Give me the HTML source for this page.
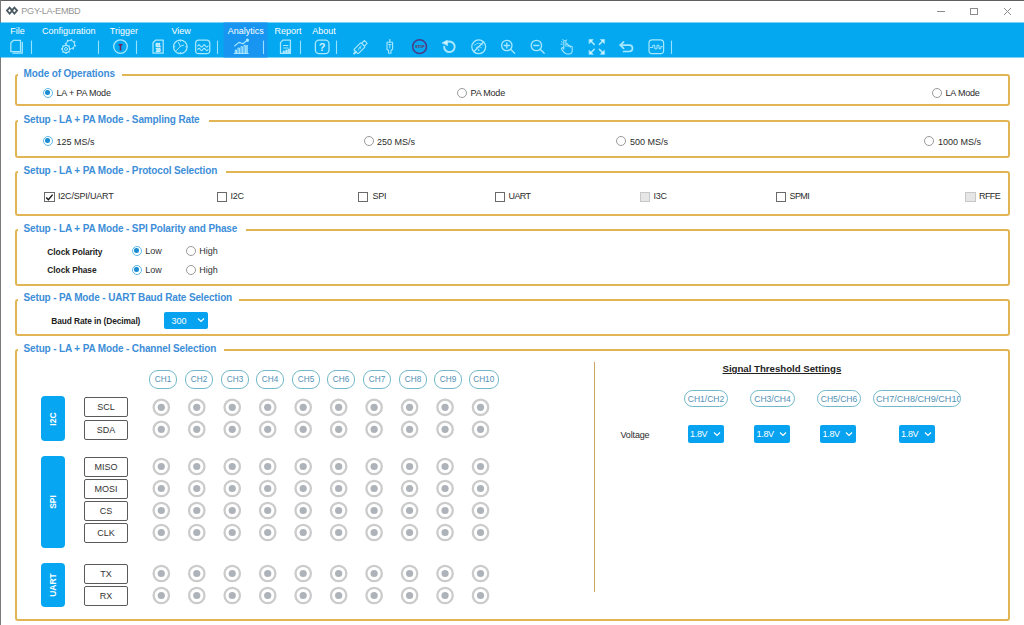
<!DOCTYPE html><html><head><meta charset="utf-8"><style>
html,body{margin:0;padding:0;}
body{width:1024px;height:625px;position:relative;overflow:hidden;background:#fff;font-family:"Liberation Sans",sans-serif;}
.t{position:absolute;white-space:nowrap;}
.b{position:absolute;box-sizing:border-box;}
.grp{position:absolute;box-sizing:border-box;border:2px solid #E2B554;border-radius:3px;}
.leg{position:absolute;background:#fff;height:6px;}
.rad{position:absolute;box-sizing:border-box;width:10px;height:10px;border-radius:50%;border:1px solid #9a9a9a;background:#fff;}
.rad.on{border:1.3px solid #5db8ec;}
.rad.on::after{content:"";position:absolute;left:1.45px;top:1.45px;width:4.5px;height:4.5px;border-radius:50%;background:#1b8cd2;}
.chk{position:absolute;box-sizing:border-box;width:10.5px;height:10.5px;border:1px solid #6a6a6a;background:#fff;}
.chk.dis{border-color:#c8c8c8;background:#e6e6e6;}
.dd{position:absolute;box-sizing:border-box;background:#08A3F0;border-radius:2px;}
.pill{position:absolute;box-sizing:border-box;border:1px solid #72B8C8;border-radius:9px;background:#fff;}
.lbl{position:absolute;box-sizing:border-box;border:1.5px solid #5a5a5a;border-radius:2px;background:#fff;}
.btn{position:absolute;box-sizing:border-box;background:#06A6F3;border-radius:4px;}
.dot{position:absolute;box-sizing:border-box;width:18px;height:18px;border-radius:50%;border:2.5px solid #cfcfcf;background:#fff;}
.dot::after{content:"";position:absolute;left:2.75px;top:2.75px;width:7.5px;height:7.5px;border-radius:50%;background:#aeb3b8;}
</style></head><body>
<div class="b" style="left:0px;top:0px;width:1024px;height:1px;background:#5f5f5f;"></div>
<div class="b" style="left:0px;top:0px;width:1px;height:625px;background:#7a7a7a;"></div>
<svg style="position:absolute;left:0;top:0" width="1024" height="22">
<g fill="none" stroke="#4a5a62" stroke-width="1.75">
<path d="M6.9 10.6 L9.6 7.6 L12.3 10.6 L9.6 13.6 Z"/>
<path d="M11.7 10.6 L14.4 7.6 L17.1 10.6 L14.4 13.6 Z"/>
</g>
<path d="M937 11.5 H945" stroke="#8c8c8c" stroke-width="1"/>
<rect x="970.5" y="8.5" width="7" height="6" fill="none" stroke="#8c8c8c" stroke-width="1"/>
<path d="M1004 8 L1011 15 M1011 8 L1004 15" stroke="#8c8c8c" stroke-width="1"/>
</svg>
<div class="t" style="left:21.30px;top:7.41px;font-size:9.2px;line-height:9.2px;color:#959595;letter-spacing:-0.3px;">PGY-LA-EMBD</div>
<svg style="position:absolute;left:0;top:0" width="1024" height="60"><rect x="0" y="22.5" width="1024" height="35" fill="#03A8F1"/><rect x="223.5" y="22.5" width="44" height="35" fill="#1895F0"/></svg>
<div class="t" style="left:10.20px;top:27.18px;font-size:9px;line-height:9px;color:#fff;">File</div>
<div class="t" style="left:42.00px;top:27.18px;font-size:9px;line-height:9px;color:#fff;">Configuration</div>
<div class="t" style="left:109.80px;top:27.18px;font-size:9px;line-height:9px;color:#fff;">Trigger</div>
<div class="t" style="left:171.50px;top:27.18px;font-size:9px;line-height:9px;color:#fff;">View</div>
<div class="t" style="left:227.80px;top:27.18px;font-size:9px;line-height:9px;color:#fff;">Analytics</div>
<div class="t" style="left:274.50px;top:27.18px;font-size:9px;line-height:9px;color:#fff;">Report</div>
<div class="t" style="left:312.30px;top:27.18px;font-size:9px;line-height:9px;color:#fff;">About</div>
<svg style="position:absolute;left:0;top:0" width="1024" height="60" fill="none" stroke="#a8e8ff" stroke-width="1.25" stroke-linecap="round" stroke-linejoin="round">
<path d="M31.5 41 V53.5" stroke-width="1.1" opacity="0.9"/>
<path d="M98.5 41 V53.5" stroke-width="1.1" opacity="0.9"/>
<path d="M136.5 41 V53.5" stroke-width="1.1" opacity="0.9"/>
<path d="M217.5 41 V53.5" stroke-width="1.1" opacity="0.9"/>
<path d="M263.5 41 V53.5" stroke-width="1.1" opacity="0.9"/>
<path d="M300.5 41 V53.5" stroke-width="1.1" opacity="0.9"/>
<path d="M336.5 41 V53.5" stroke-width="1.1" opacity="0.9"/>
<path d="M671.5 41 V53.5" stroke-width="1.1" opacity="0.9"/>
<path d="M13.5 40.3 H20.5 V51.7 H10.8 V43 Z" stroke-linejoin="round"/>
<path d="M22.3 42.3 V53.2 H13"/>
<circle cx="70.4" cy="44.6" r="4.1" stroke-width="1.1"/><path d="M74.42 45.41 L75.99 45.73 M72.67 48.02 L73.55 49.35 M69.59 48.62 L69.27 50.19 M66.98 46.87 L65.65 47.75 M66.38 43.79 L64.81 43.47 M68.13 41.18 L67.25 39.85 M71.21 40.58 L71.53 39.01 M73.82 42.33 L75.15 41.45 " stroke-width="1.5" stroke-linecap="butt"/>
<circle cx="66" cy="49" r="5.3" fill="#03A8F1" stroke="none"/>
<circle cx="66" cy="49" r="3.6" stroke-width="1.1"/><path d="M69.60 49.00 L71.00 49.00 M68.55 51.55 L69.54 52.54 M66.00 52.60 L66.00 54.00 M63.45 51.55 L62.46 52.54 M62.40 49.00 L61.00 49.00 M63.45 46.45 L62.46 45.46 M66.00 45.40 L66.00 44.00 M68.55 46.45 L69.54 45.46 " stroke-width="1.5" stroke-linecap="butt"/>
<circle cx="66" cy="49" r="1.5" stroke-width="1"/>
<circle cx="120.5" cy="46.6" r="6.8" stroke-width="1.3"/>
<path d="M118.6 44.7 H122.4 M120.5 44.7 V50.5" stroke="#7a2058" stroke-width="1.5" stroke-linecap="butt"/>
<path d="M155.5 40.2 H163.2 V53.2 H153 V42.7 Z"/>
<text x="155.4" y="47.4" font-size="4.8" font-family="Liberation Sans" font-weight="bold" fill="#d4f3ff" stroke="#d4f3ff" stroke-width="0.45" letter-spacing="-0.2">01</text><text x="155.4" y="51.9" font-size="4.8" font-family="Liberation Sans" font-weight="bold" fill="#d4f3ff" stroke="#d4f3ff" stroke-width="0.45" letter-spacing="-0.2">10</text>
<circle cx="180.3" cy="46.8" r="6.8"/><path d="M178.5 42.5 L180.3 46.3 L183.8 45 M180.3 46.3 L176.5 50.5 M180.3 40 v1.3 M180.3 52.2 v1.3 M173.6 46.8 h1.3 M185.7 46.8 h1.3" stroke-width="1"/>
<rect x="195.6" y="40.2" width="14.2" height="13.4" rx="3.2"/><path d="M197.7 46 q1.3 -2.2 2.6 0 t2.6 0 t2.6 0 t2.6 0 M197.7 49.5 q1.3 -2.2 2.6 0 t2.6 0 t2.6 0 t2.6 0" stroke-width="1.1"/>
<path d="M234.2 53.5 H248.2" stroke-width="1.2"/>
<path d="M235.3 53.5 V50 H236.5 V53.5 M238 53.5 V48 H239.4 V53.5 M241 53.5 V46.6 H242.4 V53.5 M244 53.5 V45.4 H245.4 V53.5 M247 53.5 V45 V53.5" stroke-width="1"/>
<path d="M234.8 45.8 L239 42.4 L243 43.8 L247 40.4" stroke-width="1.2"/><circle cx="247.4" cy="40.2" r="1" fill="#d4f3ff"/>
<path d="M282.8 40.2 H290.4 V53.4 H280.5 V42.6 Z"/><path d="M283.5 45.5 H288 M283.5 48 H288" stroke-width="1"/><path d="M283.2 53 V51 H284.6 V53 M285.8 53 V50 H287.2 V53 M288.3 53 V49 H289.5 V53" stroke-width="0.9" fill="#d4f3ff"/>
<rect x="315.4" y="40.2" width="13.6" height="13.4" rx="3.6" stroke-width="1.3"/><text x="318.8" y="51.4" font-size="11" font-family="Liberation Sans" font-weight="bold" fill="#d4f3ff" stroke="none">?</text>
<g transform="translate(360.5 47.2) rotate(-45)"><rect x="-6.5" y="-3" width="10" height="6" rx="0.8" stroke-width="1.2"/><path d="M3.5 -2 H7.5 V2 H3.5" stroke-width="1.1"/><path d="M-6.5 0 H-9" stroke-width="2"/><path d="M-3.5 0.5 L-0.5 -0.8 M-1 0.8 L1.2 -0.6" stroke-width="0.8"/></g>
<path d="M389.8 39.6 V42" stroke-width="1.2"/><path d="M387 42.3 H392.6 V49.2 L391 50.5 V53.3 H388.6 V50.5 L387 49.2 Z" stroke-width="1.1"/><path d="M388.6 44.5 H391 M389.8 44.5 V48" stroke-width="0.9"/>
<circle cx="419.6" cy="46.7" r="6.9" stroke="#4a3a86" stroke-width="1.5"/>
<text x="415.2" y="48.2" font-size="3.7" font-family="Liberation Sans" font-weight="bold" fill="#7a2a50" stroke="none" letter-spacing="-0.15">STOP</text>
<path d="M446.2 42.6 A5.3 5.3 0 1 1 444.2 46" stroke-width="2" stroke-linecap="butt"/><path d="M442.3 42.8 L447.3 40.2 L447.6 45.3 Z" fill="#d4f3ff" stroke-width="0.8"/>
<circle cx="478.7" cy="46.8" r="6.9" stroke-width="1.3"/><path d="M473.7 51.8 L483.7 41.8" stroke-width="1.3"/><path d="M474.3 45.3 Q478.7 41 483.1 45.3 M476 47.6 Q478.7 45 481.4 47.6" stroke-width="1" opacity="0.75"/><circle cx="478.7" cy="50" r="0.8" fill="#d4f3ff" stroke="none"/>
<circle cx="506.8" cy="45.5" r="5.2" stroke-width="1.3"/><path d="M510.6 49.3 L514.6 53.3 M504.2 45.5 H509.4 M506.8 42.9 V48.1" stroke-width="1.3"/>
<circle cx="536.4" cy="45.5" r="5.2" stroke-width="1.3"/><path d="M540.2 49.3 L544.2 53.3 M533.8 45.5 H539" stroke-width="1.3"/>
<path d="M563.8 49 V41.6 a1.05 1.05 0 0 1 2.1 0 V46.2 V44.9 a1.05 1.05 0 0 1 2.1 0 V46.4 a1.05 1.05 0 0 1 2.1 0 V47.2 a1.05 1.05 0 0 1 2.1 0 V50.6 Q572.2 53.9 569.2 53.9 H567 Q565.3 53.9 564 52.3 L561.6 49.3 a1 1 0 0 1 1.6 -1.2 Z" stroke-width="1.05"/>
<path d="M561.3 41.6 L562.3 42.4 M561 44.2 H562.2 M562.8 39.4 L563.2 40.3 M566.6 39.8 L566.2 40.6" stroke-width="0.9"/>
<path d="M590.2 40.4 L594.2 44.4 M603.4 40.4 L599.4 44.4 M590.2 53.4 L594.2 49.4 M603.4 53.4 L599.4 49.4" stroke-width="1.5"/>
<path d="M589.3 39.5 H593.3 L589.3 43.5 Z M604.3 39.5 H600.3 L604.3 43.5 Z M589.3 54.3 H593.3 L589.3 50.3 Z M604.3 54.3 H600.3 L604.3 50.3 Z" fill="#d4f3ff" stroke-width="0.6"/>
<path d="M620.3 45.1 H629.3 A3.2 3.2 0 0 1 629.3 51.5 H623.5" stroke-width="1.7"/><path d="M623.6 41.8 L620.3 45.1 L623.6 48.4" stroke-width="1.7"/>
<rect x="649" y="39.8" width="14.6" height="13.8" rx="3.2" stroke-width="1.2"/><path d="M650.5 47.5 H652.8 V45.3 H654.8 V48.8 H657 V45.3 H659 V48.8 H660.8 V46.6 H662.3" stroke-width="1"/>
</svg>
<div class="grp" style="left:15px;top:74px;width:995px;height:32px;"></div>
<div class="leg" style="left:18px;top:72px;width:104px;"></div>
<div class="t" style="left:23.50px;top:68.53px;font-size:10px;line-height:10px;color:#3D8ED8;font-weight:bold;letter-spacing:-0.14px;">Mode of Operations</div>
<div class="grp" style="left:15px;top:120px;width:995px;height:38px;"></div>
<div class="leg" style="left:18px;top:118px;width:190.5px;"></div>
<div class="t" style="left:23.50px;top:114.83px;font-size:10px;line-height:10px;color:#3D8ED8;font-weight:bold;letter-spacing:-0.14px;">Setup - LA + PA Mode - Sampling Rate</div>
<div class="grp" style="left:15px;top:171px;width:995px;height:45px;"></div>
<div class="leg" style="left:18px;top:169px;width:208px;"></div>
<div class="t" style="left:23.50px;top:165.83px;font-size:10px;line-height:10px;color:#3D8ED8;font-weight:bold;letter-spacing:-0.14px;">Setup - LA + PA Mode - Protocol Selection</div>
<div class="grp" style="left:15px;top:229px;width:995px;height:57px;"></div>
<div class="leg" style="left:18px;top:227px;width:228.3px;"></div>
<div class="t" style="left:23.50px;top:223.83px;font-size:10px;line-height:10px;color:#3D8ED8;font-weight:bold;letter-spacing:-0.14px;">Setup - LA + PA Mode - SPI Polarity and Phase</div>
<div class="grp" style="left:15px;top:299px;width:995px;height:37px;"></div>
<div class="leg" style="left:18px;top:297px;width:221px;"></div>
<div class="t" style="left:23.50px;top:293.43px;font-size:10px;line-height:10px;color:#3D8ED8;font-weight:bold;letter-spacing:-0.14px;">Setup - PA Mode - UART Baud Rate Selection</div>
<div class="grp" style="left:15px;top:349px;width:995px;height:272px;"></div>
<div class="leg" style="left:18px;top:347px;width:206px;"></div>
<div class="t" style="left:23.50px;top:344.03px;font-size:10px;line-height:10px;color:#3D8ED8;font-weight:bold;letter-spacing:-0.14px;">Setup - LA + PA Mode - Channel Selection</div>
<div class="rad on" style="left:43px;top:88px;"></div>
<div class="t" style="left:56.50px;top:89.18px;font-size:9px;line-height:9px;color:#2b2b2b;letter-spacing:-0.2px;">LA + PA Mode</div>
<div class="rad" style="left:457px;top:88px;"></div>
<div class="t" style="left:470.50px;top:89.18px;font-size:9px;line-height:9px;color:#2b2b2b;letter-spacing:-0.2px;">PA Mode</div>
<div class="rad" style="left:932px;top:88px;"></div>
<div class="t" style="left:945.50px;top:89.18px;font-size:9px;line-height:9px;color:#2b2b2b;letter-spacing:-0.2px;">LA Mode</div>
<div class="rad on" style="left:43px;top:136px;"></div>
<div class="t" style="left:56.50px;top:137.88px;font-size:9px;line-height:9px;color:#2b2b2b;">125 MS/s</div>
<div class="rad" style="left:364px;top:136px;"></div>
<div class="t" style="left:377.00px;top:137.88px;font-size:9px;line-height:9px;color:#2b2b2b;">250 MS/s</div>
<div class="rad" style="left:616px;top:136px;"></div>
<div class="t" style="left:630.00px;top:137.88px;font-size:9px;line-height:9px;color:#2b2b2b;">500 MS/s</div>
<div class="rad" style="left:924px;top:136px;"></div>
<div class="t" style="left:938.00px;top:137.88px;font-size:9px;line-height:9px;color:#2b2b2b;">1000 MS/s</div>
<div class="chk" style="left:44px;top:191.7px;"></div>
<svg style="position:absolute;left:44px;top:191.7px" width="11" height="11"><path d="M2.2 5.4 L4.4 7.7 L8.6 2.6" fill="none" stroke="#1a1a1a" stroke-width="1.45"/></svg>
<div class="t" style="left:58.00px;top:191.98px;font-size:9px;line-height:9px;color:#2b2b2b;letter-spacing:-0.2px;">I2C/SPI/UART</div>
<div class="chk" style="left:216.5px;top:191.7px;"></div>
<div class="t" style="left:230.50px;top:191.98px;font-size:9px;line-height:9px;color:#2b2b2b;letter-spacing:-0.2px;">I2C</div>
<div class="chk" style="left:357.5px;top:191.7px;"></div>
<div class="t" style="left:372.50px;top:191.98px;font-size:9px;line-height:9px;color:#2b2b2b;letter-spacing:-0.2px;">SPI</div>
<div class="chk" style="left:494.5px;top:191.7px;"></div>
<div class="t" style="left:508.50px;top:191.98px;font-size:9px;line-height:9px;color:#2b2b2b;letter-spacing:-0.6px;">UART</div>
<div class="chk dis" style="left:639.5px;top:191.7px;"></div>
<div class="t" style="left:653.50px;top:191.98px;font-size:9px;line-height:9px;color:#2b2b2b;letter-spacing:-0.2px;">I3C</div>
<div class="chk" style="left:775.5px;top:191.7px;"></div>
<div class="t" style="left:789.50px;top:191.98px;font-size:9px;line-height:9px;color:#2b2b2b;letter-spacing:-0.6px;">SPMI</div>
<div class="chk dis" style="left:965px;top:191.7px;"></div>
<div class="t" style="left:979.00px;top:191.98px;font-size:9px;line-height:9px;color:#2b2b2b;letter-spacing:-0.6px;">RFFE</div>
<div class="t" style="left:47.30px;top:247.69px;font-size:8.4px;line-height:8.4px;color:#222;font-weight:bold;letter-spacing:-0.05px;">Clock Polarity</div>
<div class="t" style="left:47.30px;top:266.39px;font-size:8.4px;line-height:8.4px;color:#222;font-weight:bold;letter-spacing:-0.05px;">Clock Phase</div>
<div class="rad on" style="left:132px;top:246px;"></div>
<div class="t" style="left:145.30px;top:247.18px;font-size:9px;line-height:9px;color:#333;">Low</div>
<div class="rad" style="left:186px;top:246px;"></div>
<div class="t" style="left:199.30px;top:247.18px;font-size:9px;line-height:9px;color:#333;">High</div>
<div class="rad on" style="left:132px;top:265px;"></div>
<div class="t" style="left:145.30px;top:265.88px;font-size:9px;line-height:9px;color:#333;">Low</div>
<div class="rad" style="left:186px;top:265px;"></div>
<div class="t" style="left:199.30px;top:265.88px;font-size:9px;line-height:9px;color:#333;">High</div>
<div class="t" style="left:51.30px;top:317.09px;font-size:8.4px;line-height:8.4px;color:#222;font-weight:bold;letter-spacing:-0.1px;">Baud Rate in (Decimal)</div>
<div class="dd" style="left:164px;top:312px;width:44px;height:16.5px;"></div>
<div class="t" style="left:171.50px;top:316.98px;font-size:9px;line-height:9px;color:#fff;">300</div>
<svg style="position:absolute;left:196px;top:316px" width="10" height="8"><path d="M2 2.5 L5 5.5 L8 2.5" fill="none" stroke="#fff" stroke-width="1.15"/></svg>
<div class="pill" style="left:149.30px;top:370.2px;width:28px;height:18.4px;"></div>
<div class="t" style="left:149.30px;width:28px;text-align:center;top:373.8px;font-size:9.8px;line-height:10px;color:#5290B4;transform:scaleX(0.84);">CH1</div>
<div class="pill" style="left:184.93px;top:370.2px;width:28px;height:18.4px;"></div>
<div class="t" style="left:184.93px;width:28px;text-align:center;top:373.8px;font-size:9.8px;line-height:10px;color:#5290B4;transform:scaleX(0.84);">CH2</div>
<div class="pill" style="left:220.56px;top:370.2px;width:28px;height:18.4px;"></div>
<div class="t" style="left:220.56px;width:28px;text-align:center;top:373.8px;font-size:9.8px;line-height:10px;color:#5290B4;transform:scaleX(0.84);">CH3</div>
<div class="pill" style="left:256.19px;top:370.2px;width:28px;height:18.4px;"></div>
<div class="t" style="left:256.19px;width:28px;text-align:center;top:373.8px;font-size:9.8px;line-height:10px;color:#5290B4;transform:scaleX(0.84);">CH4</div>
<div class="pill" style="left:291.82px;top:370.2px;width:28px;height:18.4px;"></div>
<div class="t" style="left:291.82px;width:28px;text-align:center;top:373.8px;font-size:9.8px;line-height:10px;color:#5290B4;transform:scaleX(0.84);">CH5</div>
<div class="pill" style="left:327.45px;top:370.2px;width:28px;height:18.4px;"></div>
<div class="t" style="left:327.45px;width:28px;text-align:center;top:373.8px;font-size:9.8px;line-height:10px;color:#5290B4;transform:scaleX(0.84);">CH6</div>
<div class="pill" style="left:363.08px;top:370.2px;width:28px;height:18.4px;"></div>
<div class="t" style="left:363.08px;width:28px;text-align:center;top:373.8px;font-size:9.8px;line-height:10px;color:#5290B4;transform:scaleX(0.84);">CH7</div>
<div class="pill" style="left:398.71px;top:370.2px;width:28px;height:18.4px;"></div>
<div class="t" style="left:398.71px;width:28px;text-align:center;top:373.8px;font-size:9.8px;line-height:10px;color:#5290B4;transform:scaleX(0.84);">CH8</div>
<div class="pill" style="left:434.34px;top:370.2px;width:28px;height:18.4px;"></div>
<div class="t" style="left:434.34px;width:28px;text-align:center;top:373.8px;font-size:9.8px;line-height:10px;color:#5290B4;transform:scaleX(0.84);">CH9</div>
<div class="pill" style="left:469.22px;top:370.2px;width:29.5px;height:18.4px;"></div>
<div class="t" style="left:469.22px;width:29.5px;text-align:center;top:373.8px;font-size:9.8px;line-height:10px;color:#5290B4;transform:scaleX(0.84);">CH10</div>
<svg style="position:absolute;left:0;top:0" width="1024" height="625">
<circle cx="161.30" cy="407.3" r="7.7" fill="none" stroke="#cbcbcb" stroke-width="2.3"/><circle cx="161.30" cy="407.3" r="3.6" fill="#adb3b9"/>
<circle cx="196.77" cy="407.3" r="7.7" fill="none" stroke="#cbcbcb" stroke-width="2.3"/><circle cx="196.77" cy="407.3" r="3.6" fill="#adb3b9"/>
<circle cx="232.24" cy="407.3" r="7.7" fill="none" stroke="#cbcbcb" stroke-width="2.3"/><circle cx="232.24" cy="407.3" r="3.6" fill="#adb3b9"/>
<circle cx="267.71" cy="407.3" r="7.7" fill="none" stroke="#cbcbcb" stroke-width="2.3"/><circle cx="267.71" cy="407.3" r="3.6" fill="#adb3b9"/>
<circle cx="303.18" cy="407.3" r="7.7" fill="none" stroke="#cbcbcb" stroke-width="2.3"/><circle cx="303.18" cy="407.3" r="3.6" fill="#adb3b9"/>
<circle cx="338.65" cy="407.3" r="7.7" fill="none" stroke="#cbcbcb" stroke-width="2.3"/><circle cx="338.65" cy="407.3" r="3.6" fill="#adb3b9"/>
<circle cx="374.12" cy="407.3" r="7.7" fill="none" stroke="#cbcbcb" stroke-width="2.3"/><circle cx="374.12" cy="407.3" r="3.6" fill="#adb3b9"/>
<circle cx="409.59" cy="407.3" r="7.7" fill="none" stroke="#cbcbcb" stroke-width="2.3"/><circle cx="409.59" cy="407.3" r="3.6" fill="#adb3b9"/>
<circle cx="445.06" cy="407.3" r="7.7" fill="none" stroke="#cbcbcb" stroke-width="2.3"/><circle cx="445.06" cy="407.3" r="3.6" fill="#adb3b9"/>
<circle cx="480.53" cy="407.3" r="7.7" fill="none" stroke="#cbcbcb" stroke-width="2.3"/><circle cx="480.53" cy="407.3" r="3.6" fill="#adb3b9"/>
<circle cx="161.30" cy="429.3" r="7.7" fill="none" stroke="#cbcbcb" stroke-width="2.3"/><circle cx="161.30" cy="429.3" r="3.6" fill="#adb3b9"/>
<circle cx="196.77" cy="429.3" r="7.7" fill="none" stroke="#cbcbcb" stroke-width="2.3"/><circle cx="196.77" cy="429.3" r="3.6" fill="#adb3b9"/>
<circle cx="232.24" cy="429.3" r="7.7" fill="none" stroke="#cbcbcb" stroke-width="2.3"/><circle cx="232.24" cy="429.3" r="3.6" fill="#adb3b9"/>
<circle cx="267.71" cy="429.3" r="7.7" fill="none" stroke="#cbcbcb" stroke-width="2.3"/><circle cx="267.71" cy="429.3" r="3.6" fill="#adb3b9"/>
<circle cx="303.18" cy="429.3" r="7.7" fill="none" stroke="#cbcbcb" stroke-width="2.3"/><circle cx="303.18" cy="429.3" r="3.6" fill="#adb3b9"/>
<circle cx="338.65" cy="429.3" r="7.7" fill="none" stroke="#cbcbcb" stroke-width="2.3"/><circle cx="338.65" cy="429.3" r="3.6" fill="#adb3b9"/>
<circle cx="374.12" cy="429.3" r="7.7" fill="none" stroke="#cbcbcb" stroke-width="2.3"/><circle cx="374.12" cy="429.3" r="3.6" fill="#adb3b9"/>
<circle cx="409.59" cy="429.3" r="7.7" fill="none" stroke="#cbcbcb" stroke-width="2.3"/><circle cx="409.59" cy="429.3" r="3.6" fill="#adb3b9"/>
<circle cx="445.06" cy="429.3" r="7.7" fill="none" stroke="#cbcbcb" stroke-width="2.3"/><circle cx="445.06" cy="429.3" r="3.6" fill="#adb3b9"/>
<circle cx="480.53" cy="429.3" r="7.7" fill="none" stroke="#cbcbcb" stroke-width="2.3"/><circle cx="480.53" cy="429.3" r="3.6" fill="#adb3b9"/>
<circle cx="161.30" cy="466.5" r="7.7" fill="none" stroke="#cbcbcb" stroke-width="2.3"/><circle cx="161.30" cy="466.5" r="3.6" fill="#adb3b9"/>
<circle cx="196.77" cy="466.5" r="7.7" fill="none" stroke="#cbcbcb" stroke-width="2.3"/><circle cx="196.77" cy="466.5" r="3.6" fill="#adb3b9"/>
<circle cx="232.24" cy="466.5" r="7.7" fill="none" stroke="#cbcbcb" stroke-width="2.3"/><circle cx="232.24" cy="466.5" r="3.6" fill="#adb3b9"/>
<circle cx="267.71" cy="466.5" r="7.7" fill="none" stroke="#cbcbcb" stroke-width="2.3"/><circle cx="267.71" cy="466.5" r="3.6" fill="#adb3b9"/>
<circle cx="303.18" cy="466.5" r="7.7" fill="none" stroke="#cbcbcb" stroke-width="2.3"/><circle cx="303.18" cy="466.5" r="3.6" fill="#adb3b9"/>
<circle cx="338.65" cy="466.5" r="7.7" fill="none" stroke="#cbcbcb" stroke-width="2.3"/><circle cx="338.65" cy="466.5" r="3.6" fill="#adb3b9"/>
<circle cx="374.12" cy="466.5" r="7.7" fill="none" stroke="#cbcbcb" stroke-width="2.3"/><circle cx="374.12" cy="466.5" r="3.6" fill="#adb3b9"/>
<circle cx="409.59" cy="466.5" r="7.7" fill="none" stroke="#cbcbcb" stroke-width="2.3"/><circle cx="409.59" cy="466.5" r="3.6" fill="#adb3b9"/>
<circle cx="445.06" cy="466.5" r="7.7" fill="none" stroke="#cbcbcb" stroke-width="2.3"/><circle cx="445.06" cy="466.5" r="3.6" fill="#adb3b9"/>
<circle cx="480.53" cy="466.5" r="7.7" fill="none" stroke="#cbcbcb" stroke-width="2.3"/><circle cx="480.53" cy="466.5" r="3.6" fill="#adb3b9"/>
<circle cx="161.30" cy="488.5" r="7.7" fill="none" stroke="#cbcbcb" stroke-width="2.3"/><circle cx="161.30" cy="488.5" r="3.6" fill="#adb3b9"/>
<circle cx="196.77" cy="488.5" r="7.7" fill="none" stroke="#cbcbcb" stroke-width="2.3"/><circle cx="196.77" cy="488.5" r="3.6" fill="#adb3b9"/>
<circle cx="232.24" cy="488.5" r="7.7" fill="none" stroke="#cbcbcb" stroke-width="2.3"/><circle cx="232.24" cy="488.5" r="3.6" fill="#adb3b9"/>
<circle cx="267.71" cy="488.5" r="7.7" fill="none" stroke="#cbcbcb" stroke-width="2.3"/><circle cx="267.71" cy="488.5" r="3.6" fill="#adb3b9"/>
<circle cx="303.18" cy="488.5" r="7.7" fill="none" stroke="#cbcbcb" stroke-width="2.3"/><circle cx="303.18" cy="488.5" r="3.6" fill="#adb3b9"/>
<circle cx="338.65" cy="488.5" r="7.7" fill="none" stroke="#cbcbcb" stroke-width="2.3"/><circle cx="338.65" cy="488.5" r="3.6" fill="#adb3b9"/>
<circle cx="374.12" cy="488.5" r="7.7" fill="none" stroke="#cbcbcb" stroke-width="2.3"/><circle cx="374.12" cy="488.5" r="3.6" fill="#adb3b9"/>
<circle cx="409.59" cy="488.5" r="7.7" fill="none" stroke="#cbcbcb" stroke-width="2.3"/><circle cx="409.59" cy="488.5" r="3.6" fill="#adb3b9"/>
<circle cx="445.06" cy="488.5" r="7.7" fill="none" stroke="#cbcbcb" stroke-width="2.3"/><circle cx="445.06" cy="488.5" r="3.6" fill="#adb3b9"/>
<circle cx="480.53" cy="488.5" r="7.7" fill="none" stroke="#cbcbcb" stroke-width="2.3"/><circle cx="480.53" cy="488.5" r="3.6" fill="#adb3b9"/>
<circle cx="161.30" cy="510.5" r="7.7" fill="none" stroke="#cbcbcb" stroke-width="2.3"/><circle cx="161.30" cy="510.5" r="3.6" fill="#adb3b9"/>
<circle cx="196.77" cy="510.5" r="7.7" fill="none" stroke="#cbcbcb" stroke-width="2.3"/><circle cx="196.77" cy="510.5" r="3.6" fill="#adb3b9"/>
<circle cx="232.24" cy="510.5" r="7.7" fill="none" stroke="#cbcbcb" stroke-width="2.3"/><circle cx="232.24" cy="510.5" r="3.6" fill="#adb3b9"/>
<circle cx="267.71" cy="510.5" r="7.7" fill="none" stroke="#cbcbcb" stroke-width="2.3"/><circle cx="267.71" cy="510.5" r="3.6" fill="#adb3b9"/>
<circle cx="303.18" cy="510.5" r="7.7" fill="none" stroke="#cbcbcb" stroke-width="2.3"/><circle cx="303.18" cy="510.5" r="3.6" fill="#adb3b9"/>
<circle cx="338.65" cy="510.5" r="7.7" fill="none" stroke="#cbcbcb" stroke-width="2.3"/><circle cx="338.65" cy="510.5" r="3.6" fill="#adb3b9"/>
<circle cx="374.12" cy="510.5" r="7.7" fill="none" stroke="#cbcbcb" stroke-width="2.3"/><circle cx="374.12" cy="510.5" r="3.6" fill="#adb3b9"/>
<circle cx="409.59" cy="510.5" r="7.7" fill="none" stroke="#cbcbcb" stroke-width="2.3"/><circle cx="409.59" cy="510.5" r="3.6" fill="#adb3b9"/>
<circle cx="445.06" cy="510.5" r="7.7" fill="none" stroke="#cbcbcb" stroke-width="2.3"/><circle cx="445.06" cy="510.5" r="3.6" fill="#adb3b9"/>
<circle cx="480.53" cy="510.5" r="7.7" fill="none" stroke="#cbcbcb" stroke-width="2.3"/><circle cx="480.53" cy="510.5" r="3.6" fill="#adb3b9"/>
<circle cx="161.30" cy="532.5" r="7.7" fill="none" stroke="#cbcbcb" stroke-width="2.3"/><circle cx="161.30" cy="532.5" r="3.6" fill="#adb3b9"/>
<circle cx="196.77" cy="532.5" r="7.7" fill="none" stroke="#cbcbcb" stroke-width="2.3"/><circle cx="196.77" cy="532.5" r="3.6" fill="#adb3b9"/>
<circle cx="232.24" cy="532.5" r="7.7" fill="none" stroke="#cbcbcb" stroke-width="2.3"/><circle cx="232.24" cy="532.5" r="3.6" fill="#adb3b9"/>
<circle cx="267.71" cy="532.5" r="7.7" fill="none" stroke="#cbcbcb" stroke-width="2.3"/><circle cx="267.71" cy="532.5" r="3.6" fill="#adb3b9"/>
<circle cx="303.18" cy="532.5" r="7.7" fill="none" stroke="#cbcbcb" stroke-width="2.3"/><circle cx="303.18" cy="532.5" r="3.6" fill="#adb3b9"/>
<circle cx="338.65" cy="532.5" r="7.7" fill="none" stroke="#cbcbcb" stroke-width="2.3"/><circle cx="338.65" cy="532.5" r="3.6" fill="#adb3b9"/>
<circle cx="374.12" cy="532.5" r="7.7" fill="none" stroke="#cbcbcb" stroke-width="2.3"/><circle cx="374.12" cy="532.5" r="3.6" fill="#adb3b9"/>
<circle cx="409.59" cy="532.5" r="7.7" fill="none" stroke="#cbcbcb" stroke-width="2.3"/><circle cx="409.59" cy="532.5" r="3.6" fill="#adb3b9"/>
<circle cx="445.06" cy="532.5" r="7.7" fill="none" stroke="#cbcbcb" stroke-width="2.3"/><circle cx="445.06" cy="532.5" r="3.6" fill="#adb3b9"/>
<circle cx="480.53" cy="532.5" r="7.7" fill="none" stroke="#cbcbcb" stroke-width="2.3"/><circle cx="480.53" cy="532.5" r="3.6" fill="#adb3b9"/>
<circle cx="161.30" cy="573.5" r="7.7" fill="none" stroke="#cbcbcb" stroke-width="2.3"/><circle cx="161.30" cy="573.5" r="3.6" fill="#adb3b9"/>
<circle cx="196.77" cy="573.5" r="7.7" fill="none" stroke="#cbcbcb" stroke-width="2.3"/><circle cx="196.77" cy="573.5" r="3.6" fill="#adb3b9"/>
<circle cx="232.24" cy="573.5" r="7.7" fill="none" stroke="#cbcbcb" stroke-width="2.3"/><circle cx="232.24" cy="573.5" r="3.6" fill="#adb3b9"/>
<circle cx="267.71" cy="573.5" r="7.7" fill="none" stroke="#cbcbcb" stroke-width="2.3"/><circle cx="267.71" cy="573.5" r="3.6" fill="#adb3b9"/>
<circle cx="303.18" cy="573.5" r="7.7" fill="none" stroke="#cbcbcb" stroke-width="2.3"/><circle cx="303.18" cy="573.5" r="3.6" fill="#adb3b9"/>
<circle cx="338.65" cy="573.5" r="7.7" fill="none" stroke="#cbcbcb" stroke-width="2.3"/><circle cx="338.65" cy="573.5" r="3.6" fill="#adb3b9"/>
<circle cx="374.12" cy="573.5" r="7.7" fill="none" stroke="#cbcbcb" stroke-width="2.3"/><circle cx="374.12" cy="573.5" r="3.6" fill="#adb3b9"/>
<circle cx="409.59" cy="573.5" r="7.7" fill="none" stroke="#cbcbcb" stroke-width="2.3"/><circle cx="409.59" cy="573.5" r="3.6" fill="#adb3b9"/>
<circle cx="445.06" cy="573.5" r="7.7" fill="none" stroke="#cbcbcb" stroke-width="2.3"/><circle cx="445.06" cy="573.5" r="3.6" fill="#adb3b9"/>
<circle cx="480.53" cy="573.5" r="7.7" fill="none" stroke="#cbcbcb" stroke-width="2.3"/><circle cx="480.53" cy="573.5" r="3.6" fill="#adb3b9"/>
<circle cx="161.30" cy="595.5" r="7.7" fill="none" stroke="#cbcbcb" stroke-width="2.3"/><circle cx="161.30" cy="595.5" r="3.6" fill="#adb3b9"/>
<circle cx="196.77" cy="595.5" r="7.7" fill="none" stroke="#cbcbcb" stroke-width="2.3"/><circle cx="196.77" cy="595.5" r="3.6" fill="#adb3b9"/>
<circle cx="232.24" cy="595.5" r="7.7" fill="none" stroke="#cbcbcb" stroke-width="2.3"/><circle cx="232.24" cy="595.5" r="3.6" fill="#adb3b9"/>
<circle cx="267.71" cy="595.5" r="7.7" fill="none" stroke="#cbcbcb" stroke-width="2.3"/><circle cx="267.71" cy="595.5" r="3.6" fill="#adb3b9"/>
<circle cx="303.18" cy="595.5" r="7.7" fill="none" stroke="#cbcbcb" stroke-width="2.3"/><circle cx="303.18" cy="595.5" r="3.6" fill="#adb3b9"/>
<circle cx="338.65" cy="595.5" r="7.7" fill="none" stroke="#cbcbcb" stroke-width="2.3"/><circle cx="338.65" cy="595.5" r="3.6" fill="#adb3b9"/>
<circle cx="374.12" cy="595.5" r="7.7" fill="none" stroke="#cbcbcb" stroke-width="2.3"/><circle cx="374.12" cy="595.5" r="3.6" fill="#adb3b9"/>
<circle cx="409.59" cy="595.5" r="7.7" fill="none" stroke="#cbcbcb" stroke-width="2.3"/><circle cx="409.59" cy="595.5" r="3.6" fill="#adb3b9"/>
<circle cx="445.06" cy="595.5" r="7.7" fill="none" stroke="#cbcbcb" stroke-width="2.3"/><circle cx="445.06" cy="595.5" r="3.6" fill="#adb3b9"/>
<circle cx="480.53" cy="595.5" r="7.7" fill="none" stroke="#cbcbcb" stroke-width="2.3"/><circle cx="480.53" cy="595.5" r="3.6" fill="#adb3b9"/>
</svg>
<div class="lbl" style="left:84px;top:397px;width:44px;height:20px;"></div>
<div class="t" style="left:84px;width:44px;text-align:center;top:402px;font-size:9px;line-height:10px;color:#333;">SCL</div>
<div class="lbl" style="left:84px;top:420px;width:44px;height:20px;"></div>
<div class="t" style="left:84px;width:44px;text-align:center;top:425px;font-size:9px;line-height:10px;color:#333;">SDA</div>
<div class="lbl" style="left:84px;top:457px;width:44px;height:20px;"></div>
<div class="t" style="left:84px;width:44px;text-align:center;top:462px;font-size:9px;line-height:10px;color:#333;">MISO</div>
<div class="lbl" style="left:84px;top:479px;width:44px;height:20px;"></div>
<div class="t" style="left:84px;width:44px;text-align:center;top:484px;font-size:9px;line-height:10px;color:#333;">MOSI</div>
<div class="lbl" style="left:84px;top:501px;width:44px;height:20px;"></div>
<div class="t" style="left:84px;width:44px;text-align:center;top:506px;font-size:9px;line-height:10px;color:#333;">CS</div>
<div class="lbl" style="left:84px;top:523px;width:44px;height:20px;"></div>
<div class="t" style="left:84px;width:44px;text-align:center;top:528px;font-size:9px;line-height:10px;color:#333;">CLK</div>
<div class="lbl" style="left:84px;top:564px;width:44px;height:20px;"></div>
<div class="t" style="left:84px;width:44px;text-align:center;top:569px;font-size:9px;line-height:10px;color:#333;">TX</div>
<div class="lbl" style="left:84px;top:586px;width:44px;height:20px;"></div>
<div class="t" style="left:84px;width:44px;text-align:center;top:591px;font-size:9px;line-height:10px;color:#333;">RX</div>
<div class="btn" style="left:40.5px;top:396px;width:24.5px;height:45px;"></div>
<div class="t" style="left:22.5px;top:413.5px;width:60px;text-align:center;font-size:8.5px;line-height:10px;font-weight:bold;color:#fff;transform:rotate(-90deg);">I2C</div>
<div class="btn" style="left:40.5px;top:456px;width:24.5px;height:92px;"></div>
<div class="t" style="left:22.5px;top:497.0px;width:60px;text-align:center;font-size:8.5px;line-height:10px;font-weight:bold;color:#fff;transform:rotate(-90deg);">SPI</div>
<div class="btn" style="left:40.5px;top:563px;width:24.5px;height:44px;"></div>
<div class="t" style="left:22.5px;top:580.0px;width:60px;text-align:center;font-size:8.5px;line-height:10px;font-weight:bold;color:#fff;transform:rotate(-90deg);">UART</div>
<div class="b" style="left:594px;top:361.5px;width:1px;height:230px;background:#C8A860;"></div>
<div class="t" style="left:722.50px;top:364.09px;font-size:9.7px;line-height:9.7px;color:#222;font-weight:bold;letter-spacing:-0.03px;text-decoration:underline;">Signal Threshold Settings</div>
<div class="pill" style="left:683.5px;top:390.3px;width:44px;height:17.2px;"></div>
<div class="t" style="left:683.5px;width:44px;text-align:center;top:393.6px;font-size:9.8px;line-height:10px;color:#5290B4;transform:scaleX(0.87);">CH1/CH2</div>
<div class="pill" style="left:749.5px;top:390.3px;width:45px;height:17.2px;"></div>
<div class="t" style="left:749.5px;width:45px;text-align:center;top:393.6px;font-size:9.8px;line-height:10px;color:#5290B4;transform:scaleX(0.87);">CH3/CH4</div>
<div class="pill" style="left:817px;top:390.3px;width:44px;height:17.2px;"></div>
<div class="t" style="left:817px;width:44px;text-align:center;top:393.6px;font-size:9.8px;line-height:10px;color:#5290B4;transform:scaleX(0.87);">CH5/CH6</div>
<div class="pill" style="left:872.5px;top:390.3px;width:88.5px;height:17.2px;overflow:hidden;"><div class="t" style="left:2.6px;top:2.9px;font-size:9.8px;line-height:10px;color:#5290B4;transform:scaleX(0.93);transform-origin:0 0;">CH7/CH8/CH9/CH10</div></div>
<div class="t" style="left:620.50px;top:431.18px;font-size:9px;line-height:9px;color:#2b2b2b;letter-spacing:-0.15px;">Voltage</div>
<div class="dd" style="left:687.5px;top:424.8px;width:36px;height:18px;"></div>
<div class="t" style="left:690.00px;top:430.38px;font-size:9px;line-height:9px;color:#fff;letter-spacing:-0.3px;">1.8V</div>
<svg style="position:absolute;left:711.5px;top:429.5px" width="10" height="8"><path d="M2 2.5 L5 5.5 L8 2.5" fill="none" stroke="#fff" stroke-width="1.15"/></svg>
<div class="dd" style="left:754px;top:424.8px;width:36px;height:18px;"></div>
<div class="t" style="left:756.50px;top:430.38px;font-size:9px;line-height:9px;color:#fff;letter-spacing:-0.3px;">1.8V</div>
<svg style="position:absolute;left:778px;top:429.5px" width="10" height="8"><path d="M2 2.5 L5 5.5 L8 2.5" fill="none" stroke="#fff" stroke-width="1.15"/></svg>
<div class="dd" style="left:820px;top:424.8px;width:36px;height:18px;"></div>
<div class="t" style="left:822.50px;top:430.38px;font-size:9px;line-height:9px;color:#fff;letter-spacing:-0.3px;">1.8V</div>
<svg style="position:absolute;left:844px;top:429.5px" width="10" height="8"><path d="M2 2.5 L5 5.5 L8 2.5" fill="none" stroke="#fff" stroke-width="1.15"/></svg>
<div class="dd" style="left:898.5px;top:424.8px;width:36px;height:18px;"></div>
<div class="t" style="left:901.00px;top:430.38px;font-size:9px;line-height:9px;color:#fff;letter-spacing:-0.3px;">1.8V</div>
<svg style="position:absolute;left:922.5px;top:429.5px" width="10" height="8"><path d="M2 2.5 L5 5.5 L8 2.5" fill="none" stroke="#fff" stroke-width="1.15"/></svg>
</body></html>
